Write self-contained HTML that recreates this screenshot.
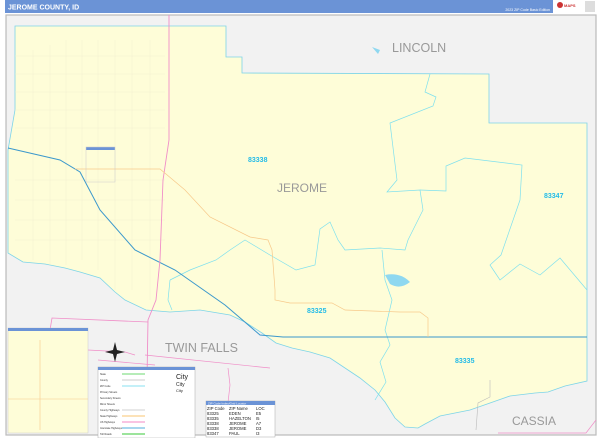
<!DOCTYPE html>
<html><head><meta charset="utf-8"><style>
html,body{margin:0;padding:0;width:600px;height:438px;overflow:hidden;background:#fff;font-family:"Liberation Sans",sans-serif}
</style></head><body>
<svg width="600" height="438" viewBox="0 0 600 438" xmlns="http://www.w3.org/2000/svg" font-family="Liberation Sans, sans-serif">
<rect x="0" y="0" width="600" height="438" fill="#fff"/>
<rect x="5" y="0" width="576" height="13" fill="#6b93d6"/>
<text x="8" y="9.5" font-size="7" font-weight="bold" fill="#fff">JEROME COUNTY, ID</text>
<text x="550" y="11" font-size="3.5" fill="#fff" text-anchor="end">2023 ZIP Code Basic Edition</text>
<rect x="553" y="0" width="44" height="14" fill="#fff"/>
<circle cx="560" cy="5" r="3" fill="#c33"/>
<text x="564" y="7" font-size="4" fill="#c33" font-weight="bold">MAPS</text>
<rect x="585" y="1" width="10" height="11" fill="#ddd"/>
<rect x="6" y="15" width="590" height="420" fill="#f2f2f2" stroke="#bbb" stroke-width="1.2"/>
<path d="M15,26 L226,26 L226,57 L242,57 L242,73 L489,74 L489,123 L587,123 L587,381 L565,386 L548,392 L535,393 L510,396 L490,403 L470,410 L440,416 L425,424 L418,428 L405,427 L395,418 L385,402 L375,390 L360,378 L345,368 L330,358 L310,352 L292,348 L276,343 L262,333 L245,322 L230,315 L200,310 L170,312 L146,310 L125,300 L115,292 L100,278 L80,272 L65,268 L45,264 L23,262 L8,253 L8,150 L15,110 Z" fill="#fefdd8" stroke="#7dd4e8" stroke-width="0.8"/>
<g fill="none" stroke="#7ee0ee" stroke-width="0.7">
<path d="M430,74 L425,92 L436,97 L433,106 L390,123 L397,180 L387,192 L420,190 L423,210 L408,240 L405,250 L380,248 L345,250 L338,240 L330,222 L320,229 L315,265 L296,270 L270,255 L245,240 L230,250 L216,260 L190,270 L170,280"/>
<path d="M420,190 L446,191 L446,166 L465,158 L522,165 L520,200 L501,255 L490,265 L500,280 L520,264 L540,275 L560,258 L587,290"/>
<path d="M382,250 L385,280 L392,300 L385,330 L390,345 L380,362 L386,382 L375,400"/>
<path d="M170,280 L168,300 L172,310"/>
</g>
<g stroke="#f0ecd0" stroke-width="0.4">
<path d="M15,56 H165 M15,74 H165 M15,92 H165 M15,110 H165 M15,128 H165 M15,180 H165 M15,200 H165 M15,220 H165 M15,240 H165 M33,50 V260 M50,45 V265 M66,40 V265 M82,40 V260 M98,40 V270 M115,40 V290 M132,40 V290 M150,40 V300"/>
</g>
<g fill="none">
<path d="M8,148 L60,160 L80,172 L100,210 L135,250 L175,270 L225,305 L260,335 L283,337 L587,337" stroke="#3b98cc" stroke-width="1"/>
<path d="M169,15 L169,140 L163,180 L160,260 L156,300 L148,320 L146,438" stroke="#f08ec8" stroke-width="0.9"/>
<path d="M75,169 L160,169 L185,190 L210,217 L250,237 L268,240 L272,250 L275,290 L275,300 L290,303 L332,303 L345,310 L400,312 L420,312 L428,318 L428,337" stroke="#f7c98a" stroke-width="0.7"/>
<path d="M148,322 L52,318 L50,330" stroke="#f08ec8" stroke-width="0.8"/>
<path d="M88,350 L125,352 L135,355 M145,355 L270,368 M228,368 L230,385 L226,420 M98,360 L155,365" stroke="#f08ec8" stroke-width="0.7"/>
<path d="M498,433 L586,433 L596,420" stroke="#f08ec8" stroke-width="0.7"/>
<path d="M490,380 L490,397 L478,403 L476,430" stroke="#bbb" stroke-width="0.6"/>
</g>
<rect x="86" y="147" width="29" height="3" fill="#6b93d6"/>
<rect x="86" y="147" width="29" height="35" fill="none" stroke="#ccc" stroke-width="0.5"/>
<path d="M385,275 Q400,272 410,282 Q400,290 390,284 Z" fill="#8fd8f0"/>
<path d="M372,47 L380,50 L378,54 Z" fill="#8fd8f0"/>
<text x="392" y="52" font-size="12.5" fill="#999">LINCOLN</text>
<text x="277" y="192" font-size="12" fill="#999">JEROME</text>
<text x="165" y="352" font-size="12.5" fill="#999">TWIN FALLS</text>
<text x="512" y="425" font-size="12" fill="#999">CASSIA</text>
<g font-size="7" fill="#22bbe8" font-weight="bold">
<text x="248" y="162">83338</text>
<text x="544" y="198">83347</text>
<text x="307" y="313">83325</text>
<text x="455" y="363">83335</text>
</g>
<rect x="8" y="328" width="80" height="105" fill="#fefdd8" stroke="#ccc" stroke-width="0.5"/>
<rect x="8" y="328" width="80" height="3" fill="#6b93d6"/>
<path d="M8,399 H88 M40,340 V430" stroke="#f7c98a" stroke-width="0.6"/>
<path d="M115,342 L117,350 L125,352 L117,354 L115,362 L113,354 L105,352 L113,350 Z" fill="#222"/>
<rect x="98" y="367" width="97" height="71" fill="#fff" stroke="#aaa" stroke-width="0.5"/>
<rect x="98" y="367" width="97" height="3" fill="#6b93d6"/>
<g font-size="2.5" fill="#333">
<text x="100" y="375">State</text><text x="100" y="381">County</text><text x="100" y="387">ZIP Code</text><text x="100" y="393">Primary Streets</text><text x="100" y="399">Secondary Streets</text><text x="100" y="405">Minor Streets</text><text x="100" y="411">County Highways</text><text x="100" y="417">State Highways</text><text x="100" y="423">US Highways</text><text x="100" y="429">Interstate Highways</text><text x="100" y="435">Toll Roads</text>
</g>
<g stroke-width="1.5">
<path d="M122,374 H145" stroke="#9ee6a0"/><path d="M122,380 H145" stroke="#ddd"/><path d="M122,386 H145" stroke="#b0ecf5"/><path d="M122,410 H145" stroke="#e0e0e0"/><path d="M122,416 H145" stroke="#fcd9a0"/><path d="M122,422 H145" stroke="#f7b0d8"/><path d="M122,428 H145" stroke="#8bc8e8"/><path d="M122,434 H145" stroke="#7cdc7c"/>
</g>
<text x="176" y="379" font-size="7" fill="#222">City</text>
<text x="176" y="386" font-size="5" fill="#222">City</text>
<text x="176" y="392" font-size="4" fill="#222">City</text>
<rect x="206" y="401" width="69" height="36" fill="#fff" stroke="#aaa" stroke-width="0.5"/>
<rect x="206" y="401" width="69" height="4" fill="#6b93d6"/>
<text x="208" y="404.3" font-size="3" fill="#fff">ZIP Code Index/Grid Locator</text>
<g font-size="4.2" fill="#222">
<text x="207" y="410">ZIP Code</text><text x="229" y="410">ZIP Name</text><text x="256" y="410">LOC</text>
<text x="207" y="415">83325</text><text x="229" y="415">EDEN</text><text x="256" y="415">E5</text>
<text x="207" y="420">83335</text><text x="229" y="420">HAZELTON</text><text x="256" y="420">I5</text>
<text x="207" y="425">83338</text><text x="229" y="425">JEROME</text><text x="256" y="425">A7</text>
<text x="207" y="430">83338</text><text x="229" y="430">JEROME</text><text x="256" y="430">D3</text>
<text x="207" y="435">83347</text><text x="229" y="435">PAUL</text><text x="256" y="435">I3</text>
</g>
</svg>
</body></html>
